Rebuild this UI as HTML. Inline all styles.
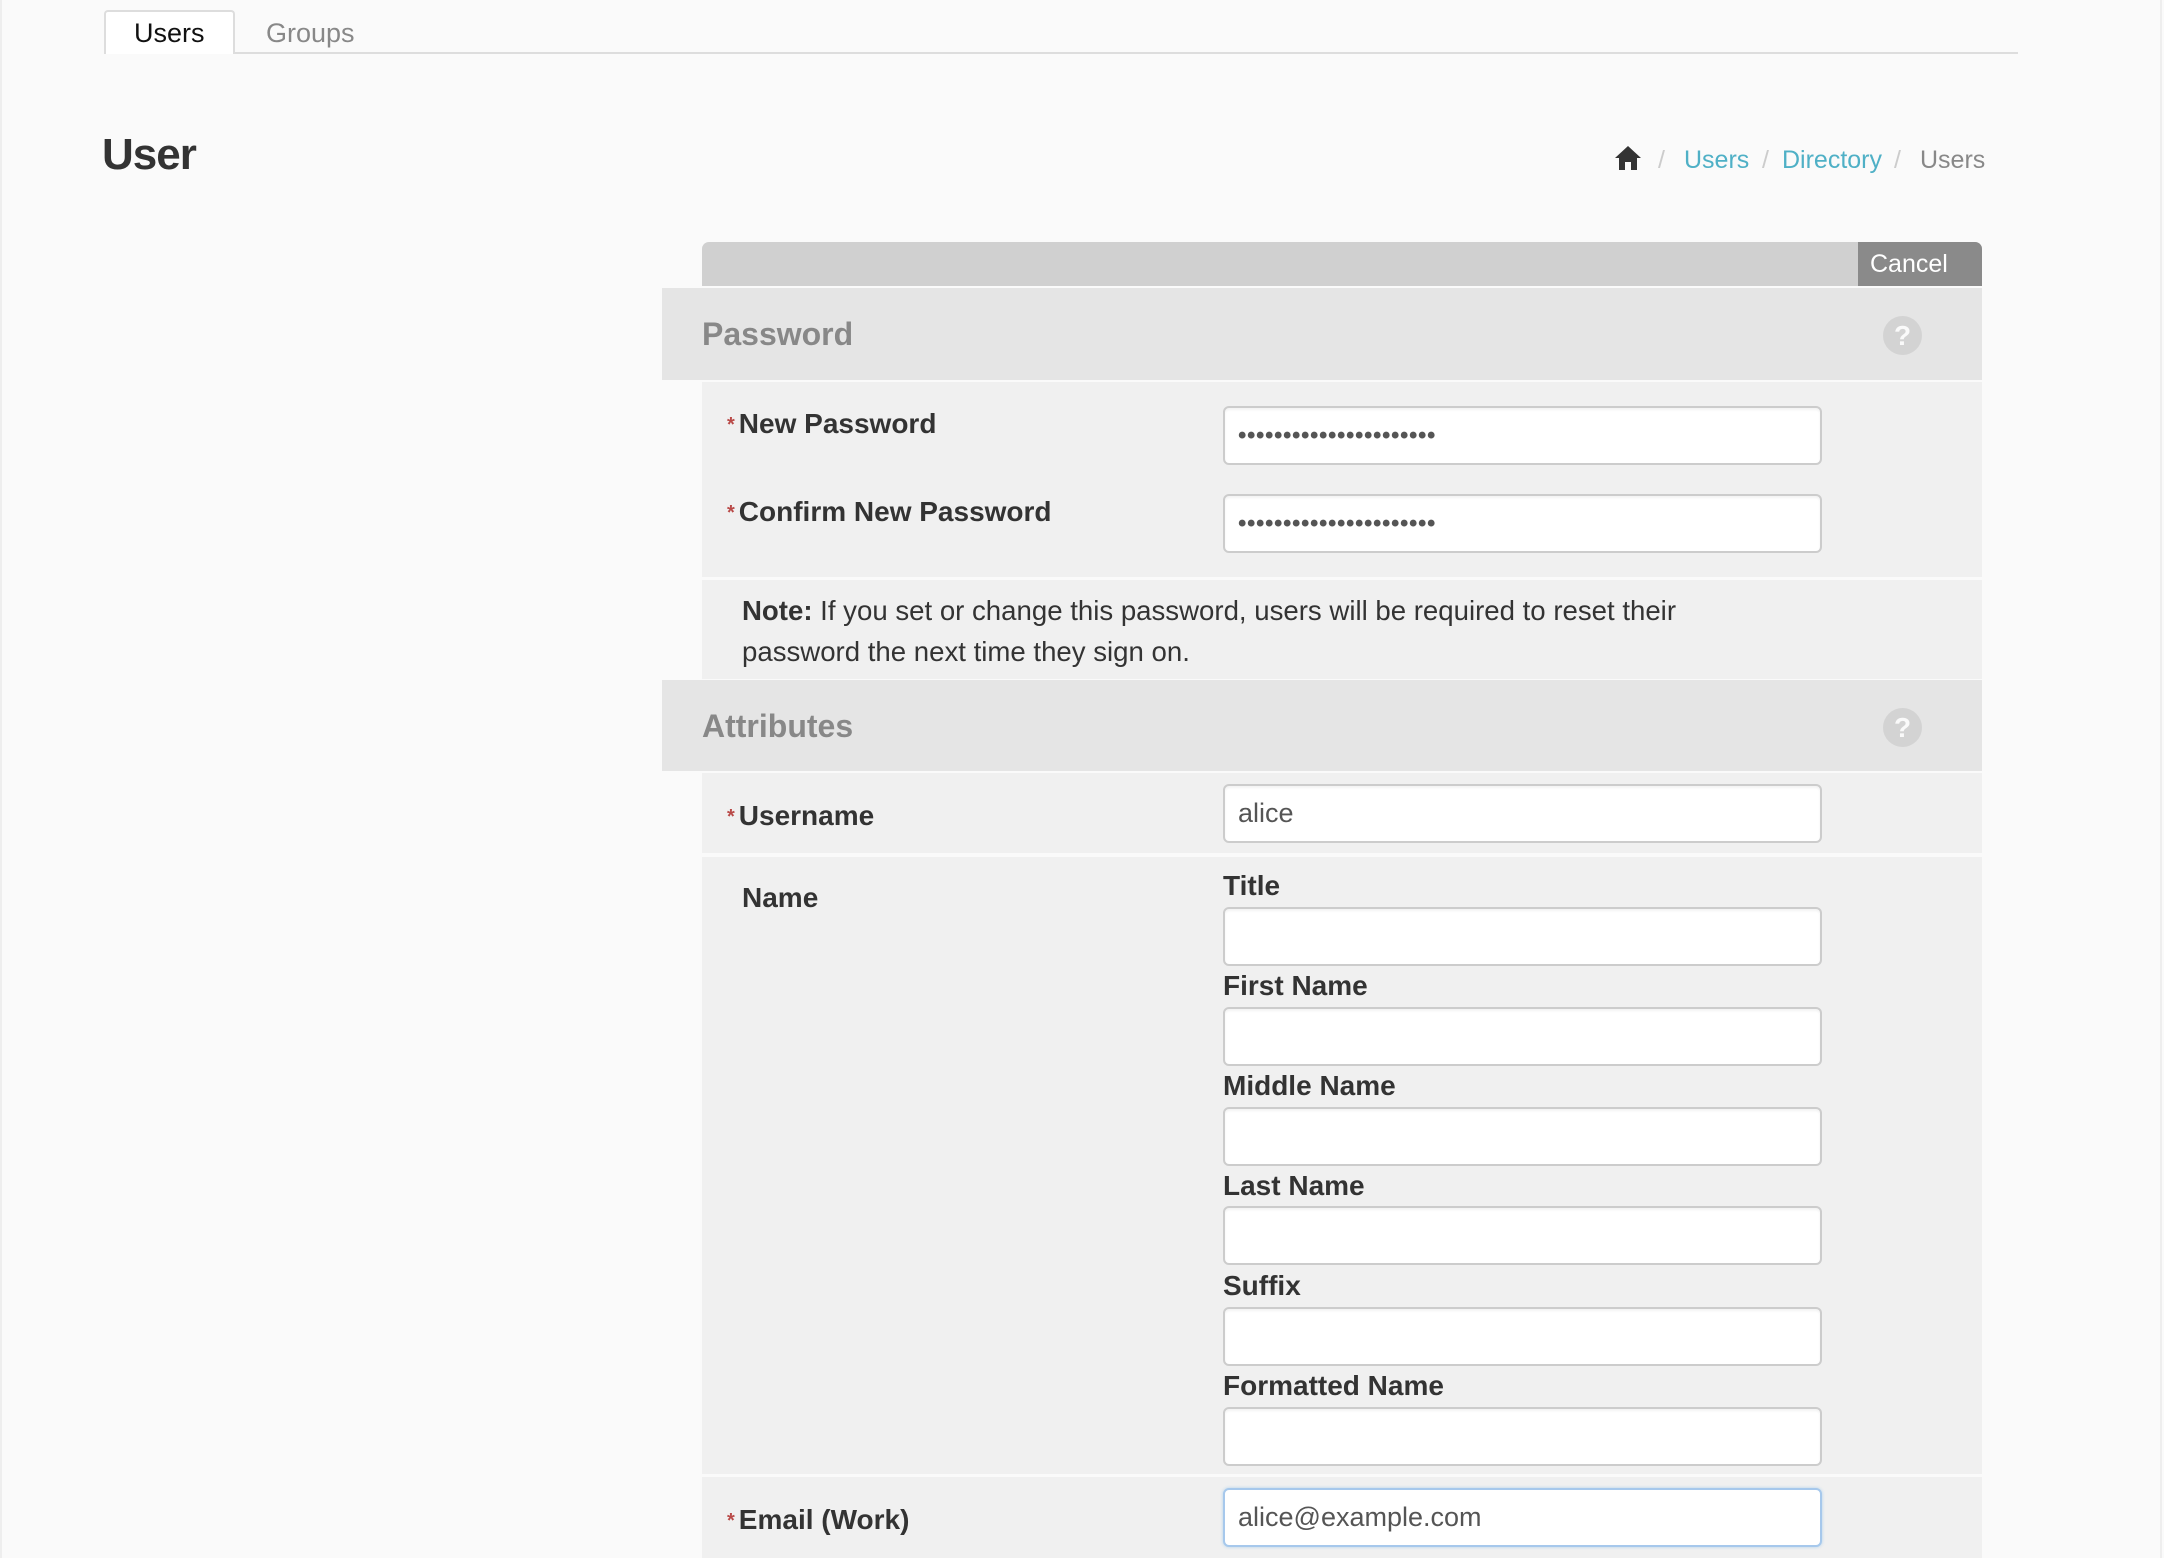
<!DOCTYPE html>
<html><head><meta charset="utf-8"><style>
*{box-sizing:border-box;margin:0;padding:0}
body{width:2164px;height:1558px;background:#fafafa;font-family:"Liberation Sans",Arial,sans-serif;position:relative;overflow:hidden;color:#333}
.a{position:absolute}
.t{position:absolute;white-space:nowrap}
.lbl{position:absolute;font-weight:bold;font-size:28px;color:#333;white-space:nowrap}
.lbl .s{color:#b94a48;font-size:20px;vertical-align:2px;margin-right:4px}
.in{position:absolute;left:1223px;width:599px;height:59px;background:#fff;border:2px solid #ccc;border-radius:6px;font-size:27px;color:#555;padding-left:13px;line-height:55px;box-shadow:inset 0 2px 2px rgba(0,0,0,.05)}
.help{position:absolute;left:1883px;width:39px;height:39px;border-radius:50%;background:#d3d3d3;color:#fafafa;font-weight:bold;font-size:28px;text-align:center;line-height:39px}
.dots{letter-spacing:0.6px;font-size:24px;color:#555;font-weight:bold}
</style></head><body>
<div class="a" style="left:0;top:0;width:2px;height:1558px;background:#eee"></div>
<div class="a" style="left:2160px;top:0;width:2px;height:1558px;background:#eee"></div>
<div class="a" style="left:104px;top:52px;width:1914px;height:2px;background:#ddd"></div>
<div class="a" style="left:104px;top:10px;width:131px;height:44px;background:#fff;border:2px solid #ddd;border-bottom:none;border-radius:4px 4px 0 0"></div>
<div class="t" style="left:134px;top:14px;font-size:27px;color:#111;line-height:38px">Users</div>
<div class="t" style="left:266px;top:14px;font-size:27px;color:#888;line-height:38px">Groups</div>
<div class="t" style="left:102px;top:130px;font-size:44px;font-weight:bold;color:#333;line-height:50px;letter-spacing:-1px">User</div>
<svg class="a" style="left:1614px;top:145px" width="28" height="26" viewBox="0 0 28 26"><path d="M14 1 L27 13 L23 13 L23 25 L17 25 L17 17 L11 17 L11 25 L5 25 L5 13 L1 13 Z" fill="#333"/></svg>
<div class="t" style="left:1658px;top:144px;font-size:25px;line-height:32px;color:#ccc">/</div>
<div class="t" style="left:1684px;top:144px;font-size:25px;line-height:32px;color:#4fb0c6">Users</div>
<div class="t" style="left:1762px;top:144px;font-size:25px;line-height:32px;color:#ccc">/</div>
<div class="t" style="left:1782px;top:144px;font-size:25px;line-height:32px;color:#4fb0c6">Directory</div>
<div class="t" style="left:1894px;top:144px;font-size:25px;line-height:32px;color:#ccc">/</div>
<div class="t" style="left:1920px;top:144px;font-size:25px;line-height:32px;color:#888">Users</div>
<div class="a" style="left:702px;top:242px;width:1280px;height:44px;background:#d0d0d0;border-radius:7px 7px 0 0"></div>
<div class="a" style="left:1858px;top:242px;width:124px;height:44px;background:#8a8a8a;border-radius:0 7px 0 0;color:#fff;font-size:25px;line-height:44px;padding-left:12px">Cancel</div>
<div class="a" style="left:662px;top:288px;width:1320px;height:92px;background:#e5e5e5"></div>
<div class="t" style="left:702px;top:315px;font-size:32px;font-weight:bold;color:#888;line-height:38px">Password</div>
<div class="help" style="top:316px">?</div>
<div class="a" style="left:702px;top:382px;width:1280px;height:195px;background:#f0f0f0"></div>
<div class="lbl" style="left:727px;top:406px;line-height:36px"><span class="s">*</span>New Password</div>
<div class="in dots" style="top:406px">••••••••••••••••••••••</div>
<div class="lbl" style="left:727px;top:494px;line-height:36px"><span class="s">*</span>Confirm New Password</div>
<div class="in dots" style="top:494px">••••••••••••••••••••••</div>
<div class="a" style="left:702px;top:580px;width:1280px;height:99px;background:#f0f0f0"></div>
<div class="a" style="left:742px;top:590px;font-size:27.6px;line-height:41px;color:#333;width:1150px"><b>Note:</b> If you set or change this password, users will be required to reset their<br>password the next time they sign on.</div>
<div class="a" style="left:662px;top:680px;width:1320px;height:91px;background:#e5e5e5"></div>
<div class="t" style="left:702px;top:707px;font-size:32px;font-weight:bold;color:#888;line-height:38px">Attributes</div>
<div class="help" style="top:708px">?</div>
<div class="a" style="left:702px;top:773px;width:1280px;height:80px;background:#f0f0f0"></div>
<div class="lbl" style="left:727px;top:798px;line-height:36px"><span class="s">*</span>Username</div>
<div class="in" style="top:784px">alice</div>
<div class="a" style="left:702px;top:857px;width:1280px;height:617px;background:#f0f0f0"></div>
<div class="lbl" style="left:742px;top:880px;line-height:36px">Name</div>
<div class="lbl" style="left:1223px;top:869px;line-height:34px">Title</div>
<div class="in" style="top:907px"></div>
<div class="lbl" style="left:1223px;top:969px;line-height:34px">First Name</div>
<div class="in" style="top:1007px"></div>
<div class="lbl" style="left:1223px;top:1069px;line-height:34px">Middle Name</div>
<div class="in" style="top:1107px"></div>
<div class="lbl" style="left:1223px;top:1169px;line-height:34px">Last Name</div>
<div class="in" style="top:1206px"></div>
<div class="lbl" style="left:1223px;top:1269px;line-height:34px">Suffix</div>
<div class="in" style="top:1307px"></div>
<div class="lbl" style="left:1223px;top:1369px;line-height:34px">Formatted Name</div>
<div class="in" style="top:1407px"></div>
<div class="a" style="left:702px;top:1477px;width:1280px;height:81px;background:#f0f0f0"></div>
<div class="lbl" style="left:727px;top:1502px;line-height:36px"><span class="s">*</span>Email (Work)</div>
<div class="in" style="top:1488px;border-color:#a6c8ec;box-shadow:0 0 3px rgba(82,168,236,.4)">alice@example.com</div>
</body></html>
